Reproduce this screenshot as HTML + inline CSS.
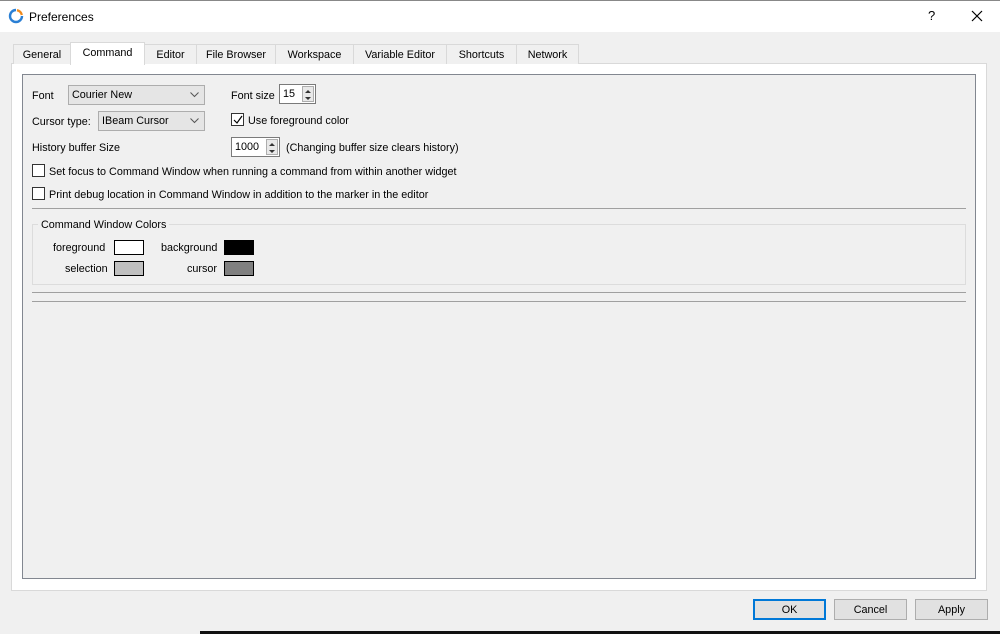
<!DOCTYPE html>
<html><head><meta charset="utf-8"><style>
*{box-sizing:border-box;margin:0;padding:0}
body{width:1000px;height:634px;background:#f0f0f0;font-family:"Liberation Sans",sans-serif;font-size:10.8px;color:#000;position:relative;overflow:hidden}
.a{position:absolute;white-space:nowrap}
.tab{position:absolute;top:44px;height:20px;background:#f0f0f0;border:1px solid #d9d9d9;border-bottom:none;text-align:center;line-height:20px}
.cb{position:absolute;width:13px;height:13px;border:1px solid #333;background:#fff}
.combo{position:absolute;height:20px;background:#e5e5e5;border:1px solid #adadad;padding-left:3px;line-height:19px}
.combo svg{position:absolute;right:5px;top:6px}
.spin{position:absolute;height:20px;background:#fff;border:1px solid #7a7a7a;padding-left:3px;line-height:19px}
.spin i{position:absolute;right:1px;top:1px;width:12px;height:16px;border:1px solid #adadad;background:#e8e8e8}
.spin svg{position:absolute;right:3px;top:3px}
.btn{position:absolute;top:599px;width:73px;height:21px;background:#e1e1e1;border:1px solid #adadad;text-align:center;line-height:20px}
</style></head><body>
<div class="a" style="left:0;top:0;width:1000px;height:32px;background:#fff;border-top:1px solid #888"></div>
<svg class="a" style="left:8px;top:8px" width="16" height="16" viewBox="0 0 16 16"><path d="M8 2a6 6 0 1 0 6 6" fill="none" stroke="#2a7fd4" stroke-width="2.4"/><path d="M9 2.2a6 6 0 0 1 4.8 4.8" fill="none" stroke="#f08a1c" stroke-width="2.4"/></svg>
<div class="a" style="left:29px;top:10px;font-size:12px">Preferences</div>
<div class="a" style="left:928px;top:8px;font-size:13px">?</div>
<svg class="a" style="left:971px;top:10px" width="12" height="12"><path d="M1 1L11 11M11 1L1 11" stroke="#000" stroke-width="1.2"/></svg>

<div class="a" style="left:11px;top:63px;width:976px;height:528px;background:#fff;border:1px solid #d9d9d9"></div>
<div class="a" style="left:22px;top:74px;width:954px;height:505px;background:#f0f0f0;border:1px solid #828790"></div>

<div class="tab" style="left:13px;width:58px">General</div>
<div class="tab" style="left:144px;width:53px">Editor</div>
<div class="tab" style="left:196px;width:80px">File Browser</div>
<div class="tab" style="left:275px;width:79px">Workspace</div>
<div class="tab" style="left:353px;width:94px">Variable Editor</div>
<div class="tab" style="left:446px;width:71px">Shortcuts</div>
<div class="tab" style="left:516px;width:63px">Network</div>
<div class="tab" style="left:70px;top:42px;height:23px;width:75px;background:#fff;line-height:21px">Command</div>

<div class="a" style="left:32px;top:90px">Font</div>
<div class="combo" style="left:68px;top:85px;width:137px">Courier New<svg width="9" height="6"><path d="M.5 .5L4.5 4.5 8.5 .5" fill="none" stroke="#555"/></svg></div>
<div class="a" style="left:231px;top:90px">Font size</div>
<div class="spin" style="left:279px;top:84px;width:37px">15<i></i><svg width="8" height="14"><path d="M1 5L4 2 7 5ZM1 9L4 12 7 9Z" fill="#333"/></svg></div>
<div class="a" style="left:32px;top:116px">Cursor type:</div>
<div class="combo" style="left:98px;top:111px;width:107px">IBeam Cursor<svg width="9" height="6"><path d="M.5 .5L4.5 4.5 8.5 .5" fill="none" stroke="#555"/></svg></div>
<div class="cb" style="left:231px;top:113px"></div>
<svg class="a" style="left:233px;top:115px" width="10" height="10"><path d="M1 5L4 8 9 1" fill="none" stroke="#000" stroke-width="1.2"/></svg>
<div class="a" style="left:248px;top:115px">Use foreground color</div>
<div class="a" style="left:32px;top:142px">History buffer Size</div>
<div class="spin" style="left:231px;top:137px;width:49px">1000<i></i><svg width="8" height="14"><path d="M1 5L4 2 7 5ZM1 9L4 12 7 9Z" fill="#333"/></svg></div>
<div class="a" style="left:286px;top:142px">(Changing buffer size clears history)</div>
<div class="cb" style="left:32px;top:164px"></div>
<div class="a" style="left:49px;top:166px">Set focus to Command Window when running a command from within another widget</div>
<div class="cb" style="left:32px;top:187px"></div>
<div class="a" style="left:49px;top:189px">Print debug location in Command Window in addition to the marker in the editor</div>
<div class="a" style="left:32px;top:208px;width:934px;height:1px;background:#a0a0a0"></div>
<div class="a" style="left:32px;top:224px;width:934px;height:61px;border:1px solid #dcdcdc"></div>
<div class="a" style="left:38px;top:219px;background:#f0f0f0;padding:0 3px">Command Window Colors</div>
<div class="a" style="left:53px;top:242px">foreground</div>
<div class="a" style="left:114px;top:240px;width:30px;height:15px;background:#fff;border:1px solid #000"></div>
<div class="a" style="left:161px;top:242px">background</div>
<div class="a" style="left:224px;top:240px;width:30px;height:15px;background:#000;border:1px solid #000"></div>
<div class="a" style="left:65px;top:263px">selection</div>
<div class="a" style="left:114px;top:261px;width:30px;height:15px;background:#c0c0c0;border:1px solid #000"></div>
<div class="a" style="left:187px;top:263px">cursor</div>
<div class="a" style="left:224px;top:261px;width:30px;height:15px;background:#808080;border:1px solid #000"></div>
<div class="a" style="left:32px;top:292px;width:934px;height:1px;background:#a0a0a0"></div>
<div class="a" style="left:32px;top:301px;width:934px;height:1px;background:#a0a0a0"></div>

<div class="btn" style="left:753px;border:2px solid #0078d7;line-height:18px">OK</div>
<div class="btn" style="left:834px">Cancel</div>
<div class="btn" style="left:915px">Apply</div>
<div class="a" style="left:200px;top:631px;width:800px;height:3px;background:#111"></div>
</body></html>
